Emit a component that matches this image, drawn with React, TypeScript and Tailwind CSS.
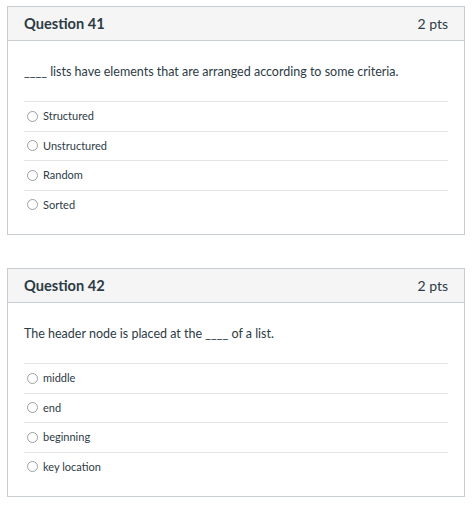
import React from "react";

type Q = { title: string; pts: string; text: string; options: string[] };

const questions: Q[] = [
  {
    title: "Question 41",
    pts: "2 pts",
    text: "____ lists have elements that are arranged according to some criteria.",
    options: ["Structured", "Unstructured", "Random", "Sorted"],
  },
  {
    title: "Question 42",
    pts: "2 pts",
    text: "The header node is placed at the ____ of a list.",
    options: ["middle", "end", "beginning", "key location"],
  },
];

function Card({ q }: { q: Q }) {
  return (
    <div className="border border-[#c7cdd1] bg-white">
      <div className="flex h-[34px] items-center justify-between border-b border-[#c7cdd1] bg-[#f5f5f5] px-4">
        <span className="text-[14.6px] font-bold text-[#2d3b45]">{q.title}</span>
        <span className="text-[14px] text-[#2d3b45]">{q.pts}</span>
      </div>
      <div className="px-4 pb-[15px] pt-[22px]">
        <div className="text-[12.5px] leading-[18px] text-[#2d3b45]">{q.text}</div>
        <div className="mt-[20px]">
          {q.options.map((o) => (
            <div
              key={o}
              className="flex h-[29.5px] items-center gap-[5px] border-t border-[#e2e5e7] pl-[3px]"
            >
              <span className="h-[11px] w-[11px] rounded-full border border-[#9aa0a5] bg-white" />
              <span className="text-[11px] text-[#2d3b45]">{o}</span>
            </div>
          ))}
        </div>
      </div>
    </div>
  );
}

export default function App() {
  return (
    <div
      className="min-h-[507px] w-[474px] bg-white pl-[7px] pr-[9px] pt-[6px]"
      style={{ fontFamily: "Lato, 'Noto Sans', sans-serif" }}
    >
      <div className="flex flex-col gap-[33px]">
        {questions.map((q) => (
          <Card key={q.title} q={q} />
        ))}
      </div>
    </div>
  );
}
